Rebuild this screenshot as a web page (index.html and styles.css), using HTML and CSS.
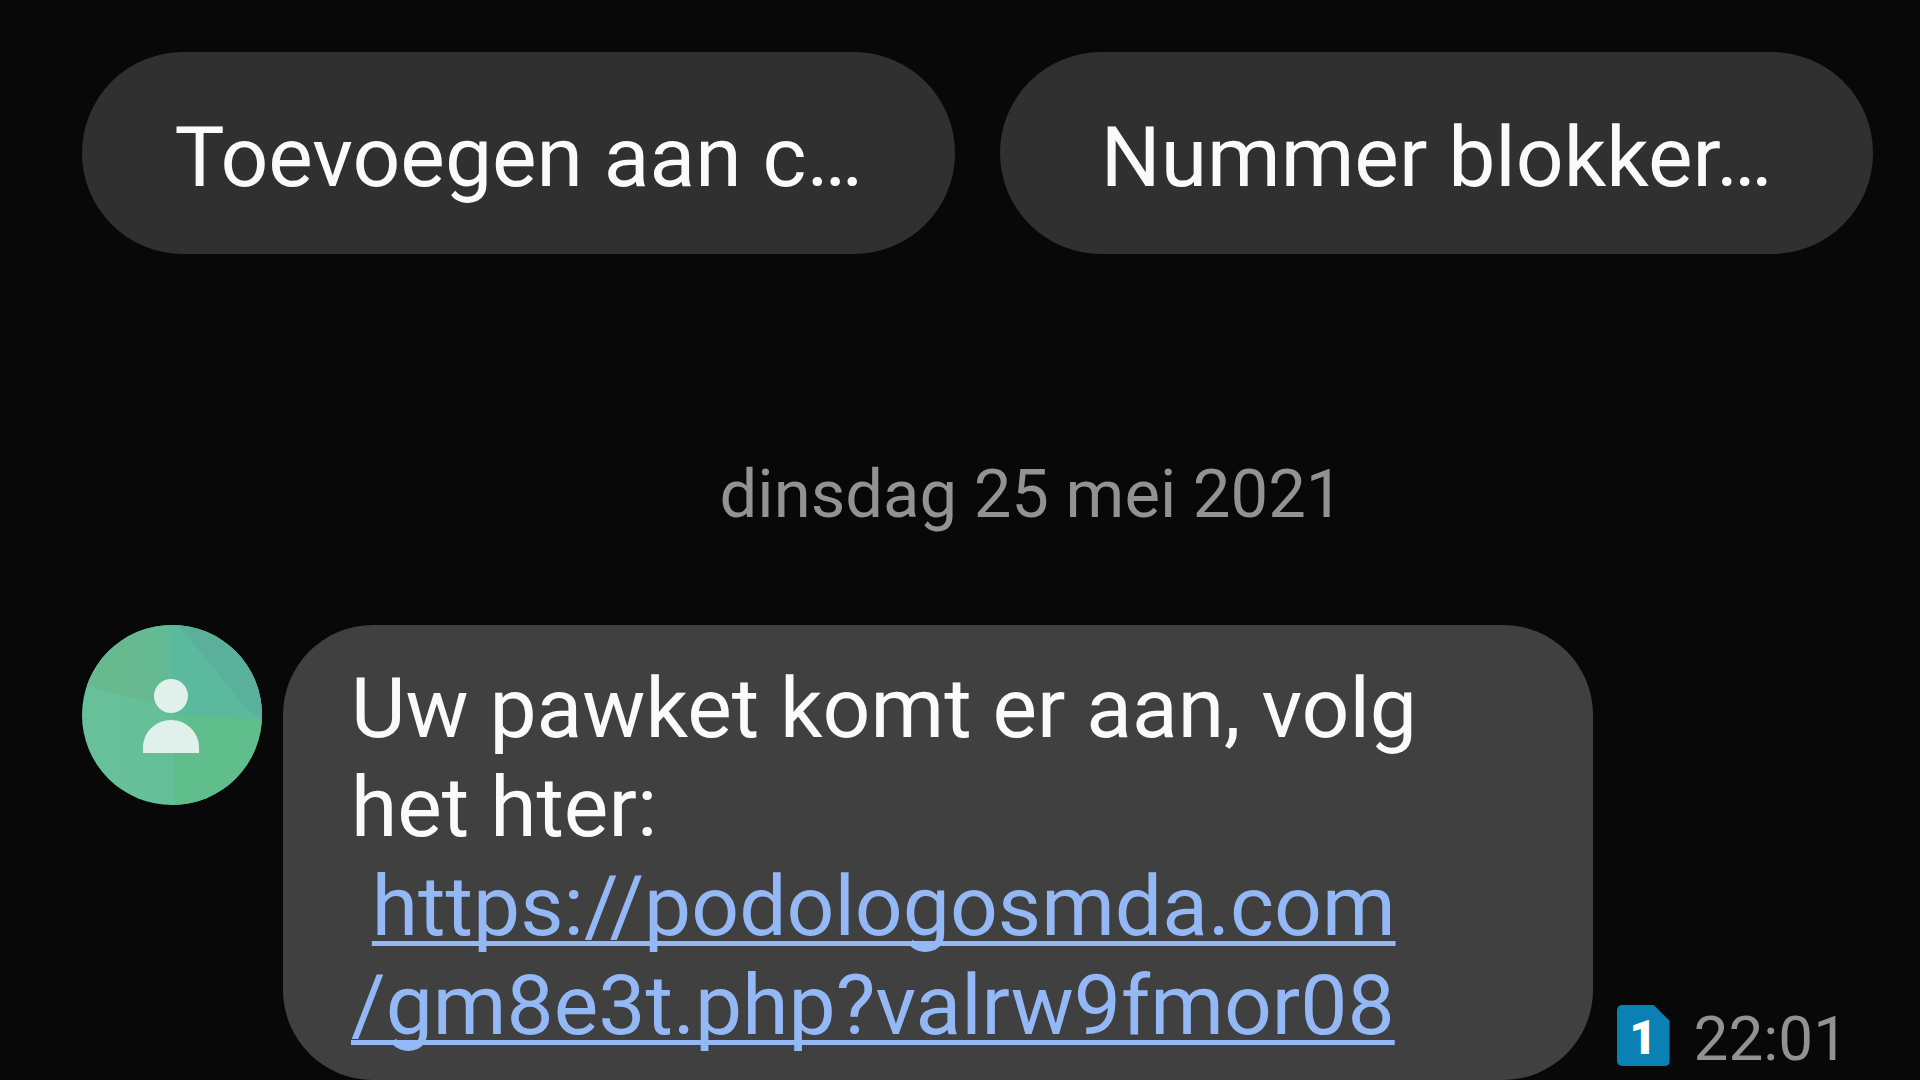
FILE: index.html
```html
<!DOCTYPE html>
<html lang="nl">
<head>
<meta charset="utf-8">
<meta name="viewport" content="width=device-width, initial-scale=1">
<title>Berichten</title>
<link rel="stylesheet" href="styles.css">
</head>
<body>
<main class="conversation">
  <div class="actions">
    <button class="action" type="button">Toevoegen aan c…</button>
    <button class="action" type="button">Nummer blokker…</button>
  </div>
  <p class="date">dinsdag 25 mei 2021</p>
  <article class="message">
    <svg class="avatar" viewBox="0 0 180 180" aria-hidden="true">
      <defs>
        <clipPath id="disc"><circle cx="90" cy="90" r="90"/></clipPath>
        <linearGradient id="base" x1="0" y1="0" x2="1" y2="0">
          <stop offset="0" stop-color="#68c09b"/>
          <stop offset="1" stop-color="#60bf95"/>
        </linearGradient>
        <linearGradient id="top" x1="0" y1="0" x2="1" y2="0">
          <stop offset="0.6" stop-color="#68b98f"/>
          <stop offset="1" stop-color="#60bb98"/>
        </linearGradient>
      </defs>
      <g clip-path="url(#disc)">
        <rect width="180" height="180" fill="url(#base)"/>
        <path d="M0 60V0H92V84Z" fill="url(#top)"/>
        <path d="M88 0H180V94L92 90Z" fill="#5bb99e"/>
        <path d="M96 0H180V94L165 84Z" fill="#5ab09b"/>
        <path d="M92 90L180 94V180H92Z" fill="#60bd8c"/>
      </g>
      <circle cx="89" cy="71" r="17" fill="#dff1ea"/>
      <path d="M61 128V122A28 27 0 0 1 117 122V128Z" fill="#dff1ea"/>
    </svg>
    <p class="bubble">Uw pawket komt er aan, volg<br>het hter:<br>&nbsp;<a class="link" href="#">https://podologosmda.com<br>/gm8e3t.php?valrw9fmor08</a></p>
    <div class="meta">
      <span class="sim">1</span>
      <time class="time" datetime="2021-05-25T22:01">22:01</time>
    </div>
  </article>
</main>
</body>
</html>
```
FILE: styles.css
```css
* {
  box-sizing: border-box;
}

body {
  margin: 0;
  background: #080808;
  color: #fafafa;
  font-family: Roboto, "Liberation Sans", sans-serif;
}

.conversation {
  padding: 52px 47px 0 82px;
}

.actions {
  display: grid;
  grid-template-columns: 1fr 1fr;
  gap: 45px;
}

.action {
  padding: 56px 0 46px;
  border: 0;
  border-radius: 101px;
  background: #303030;
  color: inherit;
  font: 84px/100px Roboto, "Liberation Sans", sans-serif;
  white-space: nowrap;
}

.date {
  margin: 200px 0 91px;
  padding-left: 108px;
  color: #929292;
  font-size: 67px;
  line-height: 80px;
  text-align: center;
}

.message {
  display: flex;
  align-items: flex-start;
}

.avatar {
  flex: none;
  width: 180px;
  height: 180px;
  margin-right: 21px;
}

.bubble {
  flex: 1;
  margin: 0;
  padding: 34px 68px 25px;
  border-radius: 90px;
  background: #404040;
  font-size: 84px;
  line-height: 99px;
  white-space: nowrap;
}

.link {
  color: #94b8f5;
  text-decoration: underline;
  text-decoration-thickness: 5px;
  text-decoration-skip-ink: none;
  text-underline-offset: 6px;
}

.meta {
  display: flex;
  align-items: flex-end;
  align-self: flex-end;
  gap: 24px;
  padding: 0 25px 0 24px;
}

.sim {
  width: 53px;
  height: 61px;
  margin-bottom: 14px;
  border-radius: 5px;
  background: #0b80b5;
  clip-path: polygon(0 0, 70% 0, 100% 26%, 100% 100%, 0 100%);
  color: #fff;
  font-size: 48px;
  font-weight: 900;
  line-height: 65px;
  text-align: center;
}

.time {
  margin-bottom: 5px;
  color: #929292;
  font-size: 62px;
  line-height: 72px;
}
```
